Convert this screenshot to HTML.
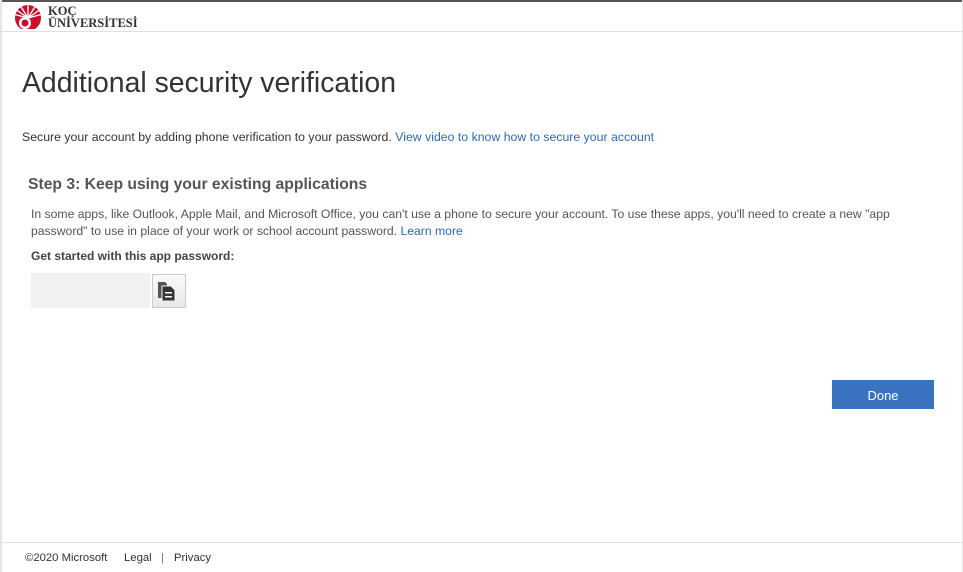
<!DOCTYPE html>
<html><head><meta charset="utf-8"><style>
body{margin:0;width:963px;height:572px;background:#fff;font-family:"Liberation Sans",sans-serif;color:#333;position:relative;overflow:hidden}
.top{position:absolute;left:0;top:0;width:963px;height:2px;background:#555}
.lb{position:absolute;left:0;top:0;width:2px;height:572px;background:#e6e6e6}
.rb{position:absolute;right:0;top:0;width:1px;height:572px;background:#e6e6e6}
.hdr{position:absolute;left:0;top:31px;width:963px;height:1px;background:#e0e0e0}
.ftl{position:absolute;left:0;top:542px;width:963px;height:1px;background:#e0e0e0}
.t{position:absolute;white-space:nowrap}
a{color:#2b6cb0;text-decoration:none}
</style></head><body>
<div class="top"></div><div class="lb"></div><div class="rb"></div><div class="hdr"></div><div class="ftl"></div>
<svg style="position:absolute;left:11px;top:4px" width="34" height="27" viewBox="0 0 34 27">
<circle cx="17" cy="14" r="13" fill="#c8102e"/>
<g stroke="#fff" stroke-width="1.3">
<line x1="17" y1="14" x2="2" y2="10"/><line x1="17" y1="14" x2="4" y2="5"/><line x1="17" y1="14" x2="9" y2="1"/><line x1="17" y1="14" x2="17" y2="0"/><line x1="17" y1="14" x2="25" y2="1"/><line x1="17" y1="14" x2="30" y2="5"/><line x1="17" y1="14" x2="32" y2="10"/>
</g>
<circle cx="14" cy="19" r="6" fill="#fff"/><circle cx="14" cy="19" r="3.5" fill="#c8102e"/>
<rect x="0" y="25" width="34" height="2" fill="#fff"/>
</svg>
<div class="t" style="left:48px;top:5px;font-family:'Liberation Serif',serif;font-weight:bold;font-size:12.5px;line-height:12px;color:#333">KOÇ<br>ÜNİVERSİTESİ</div>
<div class="t" style="left:22px;top:67px;font-size:28.4px;color:#333">Additional security verification</div>
<div class="t" style="left:22px;top:130px;font-size:12.3px;color:#333">Secure your account by adding phone verification to your password. <a>View video to know how to secure your account</a></div>
<div class="t" style="left:28px;top:176px;font-size:15.7px;font-weight:bold;color:#555">Step 3: Keep using your existing applications</div>
<div class="t" style="left:31px;top:206px;font-size:12.2px;line-height:17px;color:#555">In some apps, like Outlook, Apple Mail, and Microsoft Office, you can't use a phone to secure your account. To use these apps, you'll need to create a new "app<br>password" to use in place of your work or school account password. <a>Learn more</a></div>
<div class="t" style="left:31px;top:249px;font-size:12px;font-weight:bold;color:#444">Get started with this app password:</div>
<div style="position:absolute;left:31px;top:273px;width:119px;height:35px;background:#f1f1f1"></div>
<div style="position:absolute;left:152px;top:274px;width:34px;height:34px;border:1px solid #ccc;background:linear-gradient(#fafafa,#e8e8e8);box-sizing:border-box"></div>
<svg style="position:absolute;left:158px;top:281px" width="22" height="20" viewBox="0 0 22 20">
<path d="M0 1h7l2 2v14H0z" fill="#555"/>
<path d="M4 5h9l4 4v11H4z" fill="#333" stroke="#f4f4f4" stroke-width="1"/>
<rect x="7" y="11" width="7" height="1.5" fill="#fff"/><rect x="7" y="15" width="7" height="1.5" fill="#fff"/>
</svg>
<div style="position:absolute;left:832px;top:380px;width:102px;height:29px;background:#3a73c0;color:#fff;font-size:13px;text-align:center;line-height:31px">Done</div>
<div class="t" style="left:25px;top:552px;font-size:11.3px;color:#333">©2020 Microsoft</div>
<div class="t" style="left:124px;top:552px;font-size:11.3px;color:#333">Legal</div>
<div class="t" style="left:161px;top:552px;font-size:11px;color:#6a6aa0">|</div>
<div class="t" style="left:174px;top:552px;font-size:11.3px;color:#333">Privacy</div>
</body></html>
